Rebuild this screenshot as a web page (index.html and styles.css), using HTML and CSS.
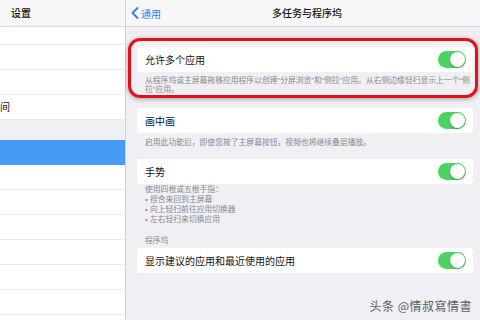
FILE: index.html
```html
<!DOCTYPE html>
<html lang="zh-CN">
<head>
  <meta charset="UTF-8" />
  <meta name="viewport" content="width=device-width, initial-scale=1.0" />
  <title>多任务与程序坞</title>
  <link rel="stylesheet" href="styles.css">
</head>
<body>
  <div class="sidebar">
    <div class="side-head">设置</div>
    <div class="side-row first"></div>
    <div class="side-row"></div>
    <div class="side-row"></div>
    <div class="side-row">间</div>
    <div class="side-gap"></div>
    <div class="side-row active"></div>
    <div class="side-row"></div>
    <div class="side-row"></div>
    <div class="side-row"></div>
    <div class="side-row"></div>
    <div class="side-row"></div>
    <div class="side-row"></div>
  </div>

  <div class="main">
    <div class="nav">
      <div class="back">
        <svg width="8" height="12" viewBox="0 0 8 12"><path d="M6.5 1 L1.5 6 L6.5 11" fill="none" stroke="#2f7df6" stroke-width="1.8" stroke-linecap="round" stroke-linejoin="round"/></svg>
        <span>通用</span>
      </div>
      <div class="nav-title">多任务与程序坞</div>
    </div>

    <div class="highlight">
      <div class="card">
        <span>允许多个应用</span>
        <div class="toggle"></div>
      </div>
      <div class="note two">从程序坞或主屏幕拖移应用程序以创建“分屏浏览”和“侧拉”应用。从右侧边缘轻扫显示上一个“侧拉”应用。</div>
    </div>

    <div class="card gap">
      <span>画中画</span>
      <div class="toggle"></div>
    </div>
    <div class="note pip">启用此功能后，即使您按了主屏幕按钮，视频也将继续叠层播放。</div>

    <div class="card">
      <span>手势</span>
      <div class="toggle"></div>
    </div>
    <div class="note list">
      <div>使用四根或五根手指：</div>
      <div>• 捏合来回到主屏幕</div>
      <div>• 向上轻扫前往应用切换器</div>
      <div>• 左右轻扫来切换应用</div>
    </div>
    <div class="section">程序坞</div>
    <div class="card">
      <span>显示建议的应用和最近使用的应用</span>
      <div class="toggle"></div>
    </div>

    <div class="mark">头条 @情叔寫情書</div>
  </div>
</body>
</html>
```

FILE: styles.css
```css
body {
  margin: 0;
  width: 480px;
  height: 320px;
  overflow: hidden;
  display: flex;
  font-family: "Noto Sans CJK SC", "Noto Sans", sans-serif;
  color: #111;
  background: #efeff4;
}
.sidebar {
  width: 125px;
  flex-shrink: 0;
  background: #fff;
  border-right: 1px solid #cfcfd4;
}
.side-head {
  height: 26px;
  line-height: 26px;
  padding-left: 11px;
  font-size: 10px;
  font-weight: 500;
  background: #f7f7f8;
  border-bottom: 1px solid #dcdce0;
}
.side-row {
  height: 24px;
  line-height: 24px;
  font-size: 10px;
  border-bottom: 1px solid #ebebee;
}
.side-row.first {
  height: 17px;
}
.side-row.active {
  background: #479bf5;
  border-bottom-color: #479bf5;
}
.side-gap {
  height: 20px;
  background: #efeff4;
}
.main {
  flex: 1;
  position: relative;
}
.nav {
  height: 26px;
  background: #f7f7f8;
  border-bottom: 1px solid #d8d8dc;
  display: flex;
  align-items: center;
  position: relative;
}
.back {
  display: flex;
  align-items: center;
  gap: 2px;
  padding-left: 5px;
  color: #2f7df6;
  font-size: 10px;
}
.nav-title {
  position: absolute;
  left: 146px;
  top: 0;
  line-height: 26px;
  font-size: 10px;
  font-weight: 500;
}
.highlight {
  margin: 11px 2px 0 2px;
  border: 3px solid #e3101c;
  border-radius: 12px;
  padding: 6px 2px 1px 6px;
  box-shadow: 0 1px 5px rgba(0, 0, 0, 0.35);
}
.card {
  height: 25px;
  background: #fff;
  border-radius: 3px;
  display: flex;
  align-items: center;
  justify-content: space-between;
  padding: 0 7px 0 8px;
  margin: 0 7px 0 11px;
  font-size: 10px;
}
.highlight .card {
  margin: 0;
}
.card.gap {
  margin-top: 10px;
}
.toggle {
  width: 28px;
  height: 17px;
  border-radius: 9px;
  background: #4bd463;
  position: relative;
}
.toggle::after {
  content: "";
  position: absolute;
  right: 1px;
  top: 1px;
  width: 15px;
  height: 15px;
  border-radius: 50%;
  background: #fff;
  box-shadow: 0 1px 2px rgba(0, 0, 0, 0.3);
}
.note {
  font-family: "Liberation Sans", "Noto Sans CJK SC", sans-serif;
  font-size: 7.8px;
  color: #8a8a8f;
  padding: 4px 0 0 8px;
  line-height: 9px;
}
.note.two {
  padding: 4px 0 0 8px;
}
.note.pip {
  margin-left: 11px;
  padding: 5px 0 12px 8px;
}
.note.list {
  margin-left: 11px;
  padding: 1px 0 0 8px;
  line-height: 10px;
}
.section {
  margin-left: 11px;
  padding: 10px 0 3px 8px;
  line-height: 10px;
  font-size: 7.8px;
  color: #8a8a8f;
}
.mark {
  position: absolute;
  right: 8px;
  bottom: 6px;
  font-size: 12px;
  color: #5e5e62;
  letter-spacing: 0.5px;
}
```
